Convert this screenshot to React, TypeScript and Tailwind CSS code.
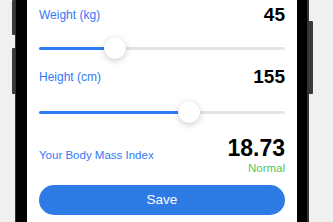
import React from "react";

const font = { fontFamily: '"Liberation Sans", Arial, sans-serif' };

function Slider({ percent }: { percent: number }) {
  return (
    <div className="relative h-[3px] w-full rounded-full bg-[#e4e4e4]">
      <div className="h-full rounded-full bg-[#2f7cf6]" style={{ width: `${percent}%` }} />
      <div
        className="absolute top-1/2 size-[22px] -translate-x-1/2 -translate-y-1/2 rounded-full bg-white shadow-[0_2px_6px_rgba(0,0,0,0.18),0_0_1px_rgba(0,0,0,0.15)]"
        style={{ left: `${percent}%` }}
      />
    </div>
  );
}

export default function App() {
  return (
    <div className="flex h-[222px] w-[333px] overflow-hidden bg-[#f0f0f0]" style={font}>
      {/* left side buttons */}
      <div className="ml-[12px] flex w-[3px] flex-col">
        <div className="h-[35px] rounded-l-[1px] bg-[#3a3a3a]" />
        <div className="mt-[13px] h-[46px] rounded-l-[1px] bg-[#3a3a3a]" />
      </div>
      <div className="w-[1px] bg-[#2e2e2e]" />
      <div className="w-[11px] bg-black" />

      {/* screen */}
      <div className="flex w-[270px] flex-col bg-white px-3">
        <div className="flex h-[30px] items-center justify-between">
          <span className="text-[12px] text-[#3478f6]">Weight (kg)</span>
          <span className="text-[19px] font-bold text-black">45</span>
        </div>
        <div className="flex h-[36px] items-center">
          <Slider percent={31} />
        </div>

        <div className="flex h-[22px] items-center justify-between">
          <span className="text-[12px] text-[#3478f6]">Height (cm)</span>
          <span className="text-[19px] font-bold text-black">155</span>
        </div>
        <div className="flex h-[48px] items-center">
          <Slider percent={61} />
        </div>

        <div className="flex items-center justify-between">
          <span className="text-[11.5px] text-[#3478f6]">Your Body Mass Index</span>
          <div className="flex flex-col items-end">
            <span className="text-[23px] font-bold leading-[24px] text-black">18.73</span>
            <span className="mt-[1px] text-[11.5px] leading-[14px] text-[#4fc95f]">Normal</span>
          </div>
        </div>

        <button className="mt-[10px] h-[30px] w-full rounded-full bg-[#2f7be5] text-[13.5px] text-white">
          Save
        </button>
      </div>

      {/* right frame */}
      <div className="w-[10px] bg-black" />
      <div className="w-[2px] bg-[#333333]" />
      <div className="flex w-[4px] flex-col">
        <div className="mt-[21px] h-[73px] rounded-r-[1px] bg-[#3a3a3a]" />
      </div>
    </div>
  );
}
